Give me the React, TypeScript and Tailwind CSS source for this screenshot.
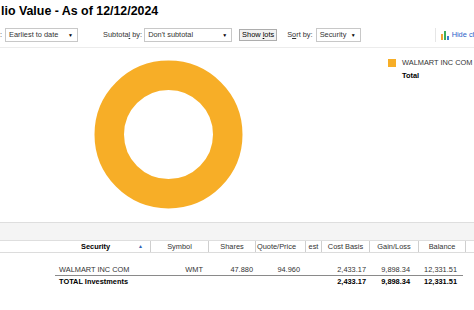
import React from 'react';

const cols = 'grid grid-cols-[55px_96px_58px_47px_50px_16px_48px_49px_47px]';

function Select({ label, width }: { label: string; width: string }) {
  return (
    <div className={`flex h-[14px] shrink-0 items-center justify-between border border-[#c8c8c8] bg-white pl-[3px] pr-[4px] ${width}`}>
      <span>{label}</span>
      <span className="text-[5px] leading-none text-black">▼</span>
    </div>
  );
}

function Donut() {
  return (
    <svg width="149" height="149" viewBox="0 0 149 149">
      <circle cx="74.5" cy="74.5" r="59.25" fill="none" stroke="#f7ae27" strokeWidth="29.5" />
    </svg>
  );
}

export default function App() {
  return (
    <div className="relative h-[310px] w-[474px] overflow-hidden bg-white text-[7.4px] text-[#333] [font-family:'Liberation_Sans',Arial,sans-serif]">
      {/* title */}
      <div className="h-[26px] pt-[2px] pl-[1px] text-[12.4px] font-bold leading-[18px] text-black">
        lio Value - As of 12/12/2024
      </div>

      {/* toolbar */}
      <div className="flex h-[22px] items-center overflow-hidden border-b border-[#ececec] pb-[3px] whitespace-nowrap">
        <span className="shrink-0">:</span>
        <div className="ml-[3px] shrink-0">
          <Select label="Earliest to date" width="w-[73px]" />
        </div>
        <span className="ml-[25px] shrink-0">
          Subtota<span className="underline">l</span> by:
        </span>
        <div className="ml-[2px] shrink-0">
          <Select label="Don't subtotal" width="w-[88px]" />
        </div>
        <div className="ml-[7px] flex h-[12px] w-[38px] shrink-0 items-center justify-center border border-[#adadad] bg-[#f2f2f2] text-black">
          <span>
            Show <span className="underline">l</span>ots
          </span>
        </div>
        <span className="ml-[10px] shrink-0">
          S<span className="underline">o</span>rt by:
        </span>
        <div className="ml-[3px] shrink-0">
          <Select label="Security" width="w-[45px]" />
        </div>
        <div className="ml-[74px] h-[14px] shrink-0 border-l border-[#e6e6e6]" />
        <svg className="ml-[5px] shrink-0" width="8" height="9" viewBox="0 0 8 9">
          <rect x="0" y="3" width="2" height="6" fill="#f2a533" />
          <rect x="3" y="0" width="2" height="9" fill="#3cae5a" />
          <rect x="6" y="5" width="2" height="4" fill="#3b7fd1" />
        </svg>
        <span className="ml-[3px] shrink-0 text-[#2a62c9]">Hide chart</span>
      </div>

      {/* chart */}
      <div className="flex h-[174px]">
        <div className="ml-[94px] mt-[12px]">
          <Donut />
        </div>
        <div className="ml-[145px] mt-[9px] flex flex-col gap-[2px] whitespace-nowrap">
          <div className="flex items-center">
            <div className="h-[8px] w-[8px] bg-[#f7ae27]" />
            <span className="ml-[6px]">WALMART INC COM</span>
          </div>
          <div className="pl-[14px] font-bold text-black">Total</div>
        </div>
      </div>

      {/* band */}
      <div className="h-[19px] border-y border-[#dedede] bg-[#f4f4f4]" />

      {/* header */}
      <div className={`${cols} h-[12px] border-b border-[#dcdcdc] leading-[11px] whitespace-nowrap`}>
        <div />
        <div className="flex items-center border-r border-[#cfcfcf] pr-[7px]">
          <span className="pl-[26px] font-bold text-black">Security</span>
          <span className="ml-auto text-[5px] text-[#2f5fb3]">▲</span>
        </div>
        <div className="border-r border-[#cfcfcf] text-center">Symbol</div>
        <div className="border-r border-[#cfcfcf] text-center">Shares</div>
        <div className="overflow-hidden border-r border-[#cfcfcf] pr-[8px] text-center">Quote/Price</div>
        <div className="border-r border-[#cfcfcf] text-center">est</div>
        <div className="border-r border-[#cfcfcf] text-center">Cost Basis</div>
        <div className="border-r border-[#cfcfcf] text-center">Gain/Loss</div>
        <div className="border-r border-[#cfcfcf] text-center">Balance</div>
      </div>

      {/* rows */}
      <div className="mt-[11px] whitespace-nowrap">
        <div className="grid grid-cols-[55px_408px]">
          <div />
          <div className="border-b border-[#8a8a8a]">
            <div className="grid h-[11px] grid-cols-[96px_58px_47px_50px_16px_48px_49px_44px] leading-[11px]">
              <div className="pl-[4px]">WALMART INC COM</div>
              <div className="pr-[6px] text-right">WMT</div>
              <div className="pr-[3px] text-right">47.880</div>
              <div className="pr-[6px] text-right">94.960</div>
              <div />
              <div className="pr-[4px] text-right">2,433.17</div>
              <div className="pr-[9px] text-right">9,898.34</div>
              <div className="pr-[6px] text-right">12,331.51</div>
            </div>
          </div>
        </div>
        <div className={`${cols} h-[12px] font-bold leading-[12px] text-black`}>
          <div />
          <div className="col-span-2 pl-[4px]">TOTAL Investments</div>
          <div />
          <div />
          <div />
          <div className="pr-[4px] text-right">2,433.17</div>
          <div className="pr-[9px] text-right">9,898.34</div>
          <div className="pr-[9px] text-right">12,331.51</div>
        </div>
      </div>
    </div>
  );
}
